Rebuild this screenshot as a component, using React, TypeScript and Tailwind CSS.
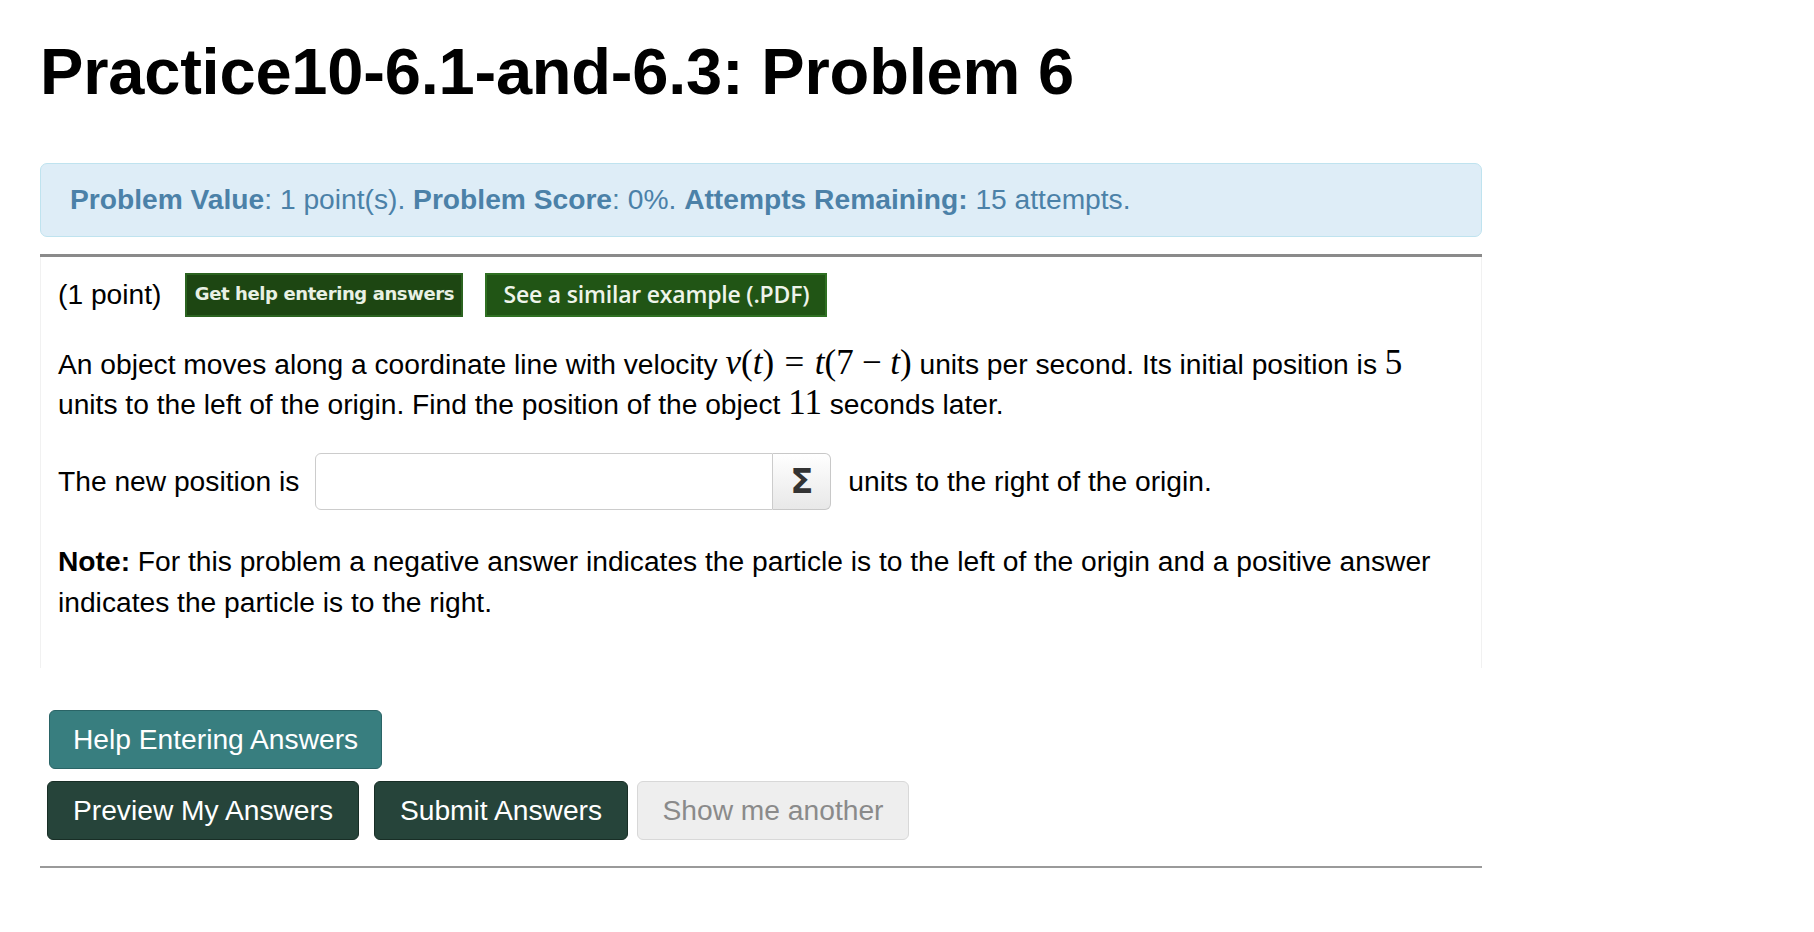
const body = "font-['Liberation_Sans','Helvetica',Arial,sans-serif]";
const serif = "font-['Liberation_Serif','Times_New_Roman',serif]";

function M({ children }: { children: React.ReactNode }) {
  return <span className={`${serif} text-[35px] leading-none`}>{children}</span>;
}

function I({ children }: { children: React.ReactNode }) {
  return <span className="italic">{children}</span>;
}

export default function App() {
  return (
    <div className={`${body} min-h-[932px] bg-white text-[28.2px] text-black`}>
      <div className="ml-[40px] w-[1442px]">
        <h1 className="pt-[36px] text-[65px] font-bold leading-[1.1] tracking-[-0.2px]">
          Practice10-6.1-and-6.3: Problem 6
        </h1>

        <div className="mt-[55px] h-[74px] rounded-[7px] border border-[#bfe3ef] bg-[#deedf7] px-[29px] py-[15px] leading-[41px] text-[#4b81a8]">
          <b>Problem Value</b>: 1 point(s). <b>Problem Score</b>: 0%. <b>Attempts Remaining:</b> 15 attempts.
        </div>

        <div className="mt-[17px] h-[3px] bg-[#8a8a8a]" />

        <div className="border-x border-[#f1f1f1] px-[17px] pb-[45px] pt-[16px] leading-[40.8px]">
          <div className="flex h-[44px] items-center">
            <span>(1 point)</span>
            <span className="ml-[24px] flex h-[44px] w-[278px] items-center justify-center border-2 border-[#2b6320] bg-[#1d4612] font-['DejaVu_Sans',sans-serif] text-[18px] font-bold tracking-[-0.4px] text-[#e8f0e4]">
              Get help entering answers
            </span>
            <span className="ml-[22px] flex h-[44px] w-[342px] items-center justify-center border-2 border-[#2f7022] bg-[#215515] font-['Open_Sans',sans-serif] text-[23px] font-semibold tracking-[-0.2px] text-[#eef4ea]">
              See a similar example (.PDF)
            </span>
          </div>

          <p className="mt-[27px]">
            An object moves along a coordinate line with velocity{' '}
            <M>
              <I>v</I>(<I>t</I>)<span className="mx-[0.3em]">=</span><I>t</I>(7<span className="mx-[0.24em]">−</span><I>t</I>)
            </M>{' '}
            units per second. Its initial position is <M>5</M>
            <br />
            units to the left of the origin. Find the position of the object <M>11</M> seconds later.
          </p>

          <div className="mt-[28px] flex h-[57px] items-center">
            <span>The new position is</span>
            <span className="ml-[16px] flex h-[57px]">
              <span className="h-full w-[458px] rounded-l-[6px] border border-[#cccccc] bg-white" />
              <span className="flex h-full w-[58px] items-center justify-center rounded-r-[6px] border border-l-0 border-[#c8c8c8] bg-gradient-to-b from-[#ffffff] to-[#e8e8e8] font-['DejaVu_Sans',sans-serif] text-[34px] font-bold text-[#333333]">
                Σ
              </span>
            </span>
            <span className="ml-[17px]">units to the right of the origin.</span>
          </div>

          <p className="mt-[31px]">
            <b>Note:</b> For this problem a negative answer indicates the particle is to the left of the origin and a positive answer
            <br />
            indicates the particle is to the right.
          </p>
        </div>

        <div className="mt-[42px] pl-[9px]">
          <button className="h-[59px] rounded-[6px] border border-[#2a6466] bg-[#387e7f] px-[23px] text-[28.2px] text-white">
            Help Entering Answers
          </button>
        </div>

        <div className="mt-[12px] flex pl-[7px]">
          <button className="h-[59px] w-[312px] rounded-[6px] border border-[#182e26] bg-[#26443a] text-[28.2px] text-white">
            Preview My Answers
          </button>
          <button className="ml-[15px] h-[59px] w-[254px] rounded-[6px] border border-[#182e26] bg-[#26443a] text-[28.2px] text-white">
            Submit Answers
          </button>
          <button className="ml-[9px] h-[59px] w-[272px] rounded-[6px] border border-[#d8d8d8] bg-[#eeeeee] text-[28.2px] text-[#8a8a8a]">
            Show me another
          </button>
        </div>

        <div className="mt-[26px] h-[2px] bg-[#9a9a9a]" />
      </div>
    </div>
  );
}
